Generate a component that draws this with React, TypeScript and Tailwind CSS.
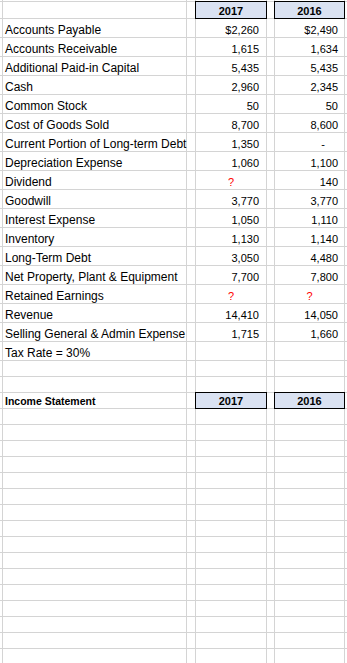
import React from "react";

type Row = {
  label?: string;
  y17?: string;
  y16?: string;
};

const rows: Row[] = [
  { label: "Accounts Payable", y17: "$2,260", y16: "$2,490" },
  { label: "Accounts Receivable", y17: "1,615", y16: "1,634" },
  { label: "Additional Paid-in Capital", y17: "5,435", y16: "5,435" },
  { label: "Cash", y17: "2,960", y16: "2,345" },
  { label: "Common Stock", y17: "50", y16: "50" },
  { label: "Cost of Goods Sold", y17: "8,700", y16: "8,600" },
  { label: "Current Portion of Long-term Debt", y17: "1,350", y16: "-" },
  { label: "Depreciation Expense", y17: "1,060", y16: "1,100" },
  { label: "Dividend", y17: "?", y16: "140" },
  { label: "Goodwill", y17: "3,770", y16: "3,770" },
  { label: "Interest Expense", y17: "1,050", y16: "1,110" },
  { label: "Inventory", y17: "1,130", y16: "1,140" },
  { label: "Long-Term Debt", y17: "3,050", y16: "4,480" },
  { label: "Net Property, Plant & Equipment", y17: "7,700", y16: "7,800" },
  { label: "Retained Earnings", y17: "?", y16: "?" },
  { label: "Revenue", y17: "14,410", y16: "14,050" },
  { label: "Selling General & Admin Expense", y17: "1,715", y16: "1,660" },
  { label: "Tax Rate = 30%" },
];

const grid = "grid grid-cols-[3px_184px_9px_71px_8px_70px_1fr]";
const cell = "border-r border-b border-[#d4d4d4]";
const last = "border-b border-[#d4d4d4]";

const Value: React.FC<{ v?: string; pr: string }> = ({ v, pr }) => {
  if (v === "?")
    return (
      <div className={`${cell} flex items-end justify-center text-[11px] leading-[14px] text-[#ff0000]`}>?</div>
    );
  if (v === "-")
    return (
      <div className={`${cell} flex items-end justify-end pr-[19px] text-[11px] leading-[14px]`}>-</div>
    );
  return (
    <div className={`${cell} flex items-end justify-end ${pr} text-[11px] leading-[14px]`}>{v}</div>
  );
};

const YearBox: React.FC<{ year: string }> = ({ year }) => (
  <div className={`${cell} relative`}>
    <div className="absolute -left-px -top-px -right-px -bottom-px border border-black bg-[#dae2f2] flex items-end justify-center text-[11px] leading-[14px] font-bold">
      {year}
    </div>
  </div>
);

const Blank: React.FC<{ h: string }> = ({ h }) => (
  <div className={`${grid} ${h}`}>
    <div className={cell} />
    <div className={cell} />
    <div className={cell} />
    <div className={cell} />
    <div className={cell} />
    <div className={cell} />
    <div className={last} />
  </div>
);

export default function App() {
  return (
    <div className="h-[663px] w-[347px] overflow-hidden bg-white text-black font-['Liberation_Sans',Arial,sans-serif]">
      <Blank h="h-[2px]" />

      <div className={`${grid} h-[17px]`}>
        <div className={cell} />
        <div className={cell} />
        <div className={cell} />
        <YearBox year="2017" />
        <div className={cell} />
        <YearBox year="2016" />
        <div className={last} />
      </div>

      {rows.map((r, i) => (
        <div key={i} className={`${grid} h-[19px]`}>
          <div className={cell} />
          <div className={`${cell} flex items-end pl-[2px] whitespace-nowrap text-[12px] leading-[14px]`}>
            {r.label}
          </div>
          <div className={cell} />
          <Value v={r.y17} pr="pr-[7px]" />
          <div className={cell} />
          <Value v={r.y16} pr="pr-[6px]" />
          <div className={last} />
        </div>
      ))}

      <Blank h="h-[16px]" />
      <Blank h="h-[16px]" />

      <div className={`${grid} h-[16px]`}>
        <div className={cell} />
        <div className={`${cell} flex items-end pl-[2px] whitespace-nowrap text-[10.5px] leading-[14px] font-bold`}>
          Income Statement
        </div>
        <div className={cell} />
        <YearBox year="2017" />
        <div className={cell} />
        <YearBox year="2016" />
        <div className={last} />
      </div>

      {Array.from({ length: 17 }).map((_, i) => (
        <Blank key={i} h="h-[16px]" />
      ))}
    </div>
  );
}
